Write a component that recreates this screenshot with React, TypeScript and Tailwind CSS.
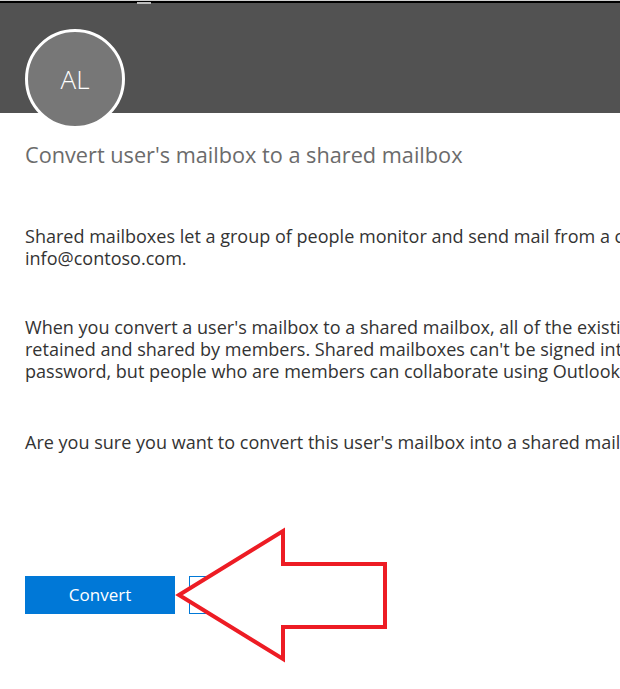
const font = { fontFamily: '"Open Sans", "Noto Sans", sans-serif' };

function Avatar({ initials }: { initials: string }) {
  return (
    <div className="relative z-10 flex h-[100px] w-[100px] items-center justify-center rounded-full border-[3px] border-white bg-[#777777]">
      <span className="text-[26px] font-light text-white">{initials}</span>
    </div>
  );
}

function PointerArrow() {
  return (
    <svg
      className="pointer-events-none absolute left-0 top-0 z-20"
      width="620"
      height="689"
      viewBox="0 0 620 689"
      aria-hidden="true"
    >
      <polygon
        points="179,595 283,531 283,564 385,564 385,627 283,627 283,659"
        fill="white"
        stroke="#ed1c24"
        strokeWidth="4"
        strokeLinejoin="miter"
      />
    </svg>
  );
}

export default function App() {
  return (
    <div className="relative h-[689px] w-[620px] overflow-hidden bg-white" style={font}>
      <div className="h-px bg-[#cfcfcf]" />
      <div className="relative h-[2px] bg-black">
        <div className="absolute left-[137px] top-[1px] h-[2px] w-[14px] bg-[#bdbdbd]" />
      </div>
      <header className="h-[110px] bg-[#525252] pl-[25px] pt-[26px]">
        <Avatar initials="AL" />
      </header>

      <main className="w-[1000px] pl-[25px] pt-[27px]">
        <h1 className="text-[21.7px] leading-[30px] text-[#6b6b6b]">
          Convert user's mailbox to a shared mailbox
        </h1>

        <div className="mt-[55px] whitespace-nowrap text-[18.05px] leading-[22px] text-[#333333]">
          <p>
            Shared mailboxes let a group of people monitor and send mail from a common email address, such as
            <br />
            info@contoso.com.
          </p>
          <p className="mt-[47px]">
            When you convert a user's mailbox to a shared mailbox, all of the existing email and calendar is
            <br />
            retained and shared by members. Shared mailboxes can't be signed into directly and don't have a
            <br />
            password, but people who are members can collaborate using Outlook.
          </p>
          <p className="mt-[49px]">Are you sure you want to convert this user's mailbox into a shared mailbox?</p>
        </div>

        <div className="mt-[123px] flex gap-[14px]">
          <button
            type="button"
            className="h-[38px] w-[150px] bg-[#0078d7] text-[17px] text-white"
          >
            Convert
          </button>
          <button
            type="button"
            className="h-[38px] w-[150px] border border-[#0078d7] bg-white text-[17px] text-[#333333]"
          >
            Cancel
          </button>
        </div>
      </main>

      <PointerArrow />
    </div>
  );
}
